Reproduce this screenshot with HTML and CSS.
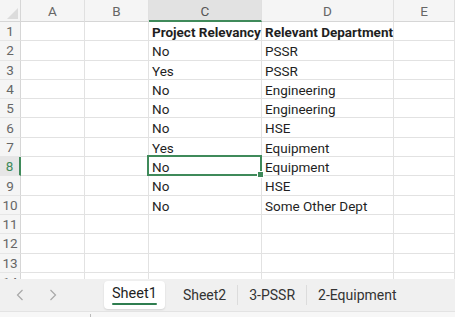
FILE: index.html
```html
<!DOCTYPE html>
<html lang="en">
<head>
    <meta charset="UTF-8">
    <meta name="viewport" content="width=device-width, initial-scale=1.0">
    <title>Sheet1</title>
    <link rel="stylesheet" href="styles.css">
</head>
<body>
    <div class="workbook">
        <div class="sheet">
            <div class="corner"><span class="corner-mark"></span></div>
            <div class="col-head">A</div>
            <div class="col-head">B</div>
            <div class="col-head active">C</div>
            <div class="col-head">D</div>
            <div class="col-head">E</div>

            <div class="row-head">1</div><div class="cell"></div><div class="cell"></div><div class="cell bold">Project Relevancy</div><div class="cell bold">Relevant Department</div><div class="cell"></div>
            <div class="row-head">2</div><div class="cell"></div><div class="cell"></div><div class="cell">No</div><div class="cell">PSSR</div><div class="cell"></div>
            <div class="row-head">3</div><div class="cell"></div><div class="cell"></div><div class="cell">Yes</div><div class="cell">PSSR</div><div class="cell"></div>
            <div class="row-head">4</div><div class="cell"></div><div class="cell"></div><div class="cell">No</div><div class="cell">Engineering</div><div class="cell"></div>
            <div class="row-head">5</div><div class="cell"></div><div class="cell"></div><div class="cell">No</div><div class="cell">Engineering</div><div class="cell"></div>
            <div class="row-head">6</div><div class="cell"></div><div class="cell"></div><div class="cell">No</div><div class="cell">HSE</div><div class="cell"></div>
            <div class="row-head">7</div><div class="cell"></div><div class="cell"></div><div class="cell">Yes</div><div class="cell">Equipment</div><div class="cell"></div>
            <div class="row-head active">8</div><div class="cell"></div><div class="cell"></div><div class="cell selected">No</div><div class="cell">Equipment</div><div class="cell"></div>
            <div class="row-head">9</div><div class="cell"></div><div class="cell"></div><div class="cell">No</div><div class="cell">HSE</div><div class="cell"></div>
            <div class="row-head">10</div><div class="cell"></div><div class="cell"></div><div class="cell">No</div><div class="cell">Some Other Dept</div><div class="cell"></div>
            <div class="row-head">11</div><div class="cell"></div><div class="cell"></div><div class="cell"></div><div class="cell"></div><div class="cell"></div>
            <div class="row-head">12</div><div class="cell"></div><div class="cell"></div><div class="cell"></div><div class="cell"></div><div class="cell"></div>
            <div class="row-head">13</div><div class="cell"></div><div class="cell"></div><div class="cell"></div><div class="cell"></div><div class="cell"></div>
            <div class="row-head">14</div><div class="cell"></div><div class="cell"></div><div class="cell"></div><div class="cell"></div><div class="cell"></div>
        </div>

        <div class="tab-bar">
            <div class="nav">
                <svg class="arrow" width="8" height="12" viewBox="0 0 8 12"><polyline points="6.5,1 1.5,6 6.5,11" fill="none" stroke="#a8a8a8" stroke-width="1.2"/></svg>
                <svg class="arrow" width="8" height="12" viewBox="0 0 8 12"><polyline points="1.5,1 6.5,6 1.5,11" fill="none" stroke="#a8a8a8" stroke-width="1.2"/></svg>
            </div>
            <div class="tab current">Sheet1</div>
            <div class="tab">Sheet2</div>
            <div class="tab">3-PSSR</div>
            <div class="tab">2-Equipment</div>
        </div>
        <div class="status-strip"><span class="tick"></span></div>
    </div>
</body>
</html>
```

FILE: styles.css
```css
body {
    margin: 0;
    padding: 0;
    background-color: #fff;
    font-family: 'Roboto', 'Liberation Sans', sans-serif;
    color: #1f1f1f;
}
.workbook {
    width: 455px;
    height: 317px;
    overflow: hidden;
    display: flex;
    flex-direction: column;
}
.sheet {
    height: 279px;
    flex: none;
    overflow: hidden;
    display: grid;
    grid-template-columns: 21px 64px 64px 113px 132px 1fr;
    grid-template-rows: 22px;
    grid-auto-rows: 19.3px;
}
.corner {
    background-color: #f5f5f5;
    border-right: 1px solid #d6d6d6;
    border-bottom: 1px solid #d6d6d6;
    box-sizing: border-box;
    position: relative;
}
.corner-mark {
    position: absolute;
    right: 2px;
    bottom: 2px;
    width: 0;
    height: 0;
    border-left: 11px solid transparent;
    border-bottom: 11px solid #dcdcdc;
}
.col-head {
    background-color: #f5f5f5;
    border-right: 1px solid #e0e0e0;
    border-bottom: 1px solid #d6d6d6;
    box-sizing: border-box;
    display: flex;
    align-items: center;
    justify-content: center;
    font-size: 13.5px;
    color: #666;
    padding-top: 1px;
}
.col-head.active {
    background-color: #e2e2e2;
    border-bottom: 2px solid #3f8a5a;
    color: #555;
}
.row-head {
    background-color: #f5f5f5;
    border-right: 1px solid #d6d6d6;
    border-bottom: 1px solid #e6e6e6;
    box-sizing: border-box;
    display: flex;
    align-items: center;
    justify-content: center;
    font-size: 13.5px;
    color: #666;
}
.row-head.active {
    background-color: #e6e6e6;
    border-right: 2px solid #3f8a5a;
    color: #3f8a5a;
}
.cell {
    border-right: 1px solid #e2e2e2;
    border-bottom: 1px solid #e2e2e2;
    box-sizing: border-box;
    font-size: 13.5px;
    line-height: 18px;
    padding: 1px 3px 0;
    white-space: nowrap;
    overflow: visible;
}
.bold {
    font-weight: bold;
}
.selected {
    position: relative;
}
.selected::after {
    content: '';
    position: absolute;
    left: -2px;
    top: -2px;
    right: -1px;
    bottom: -1px;
    border: 2px solid #3f8a5a;
}
.selected::before {
    content: '';
    position: absolute;
    right: -3px;
    bottom: -3px;
    width: 5px;
    height: 5px;
    background-color: #3f8a5a;
    border: 1px solid #fff;
    z-index: 2;
}
.tab-bar {
    height: 32px;
    flex: none;
    background-color: #f0f0f0;
    display: flex;
    align-items: center;
    font-size: 14px;
}
.nav {
    width: 104px;
    display: flex;
    align-items: center;
    gap: 25px;
    padding-left: 16px;
    box-sizing: border-box;
}
.arrow {
    display: block;
}
.tab {
    padding: 0 11px;
    height: 20px;
    line-height: 20px;
    color: #333;
    border-left: 1px solid #dcdcdc;
}
.tab.current {
    background-color: #fff;
    border-left: none;
    height: 28px;
    line-height: 26px;
    border-radius: 4px;
    box-shadow: 0 1px 2px rgba(0, 0, 0, 0.12);
    padding: 0 8px;
    color: #1f1f1f;
    position: relative;
    margin-right: 5px;
    font-size: 14.5px;
}
.tab.current::after {
    content: '';
    position: absolute;
    left: 8px;
    right: 8px;
    bottom: 4px;
    height: 2px;
    border-radius: 1px;
    background-color: #2e7d4f;
}
.tab.current + .tab {
    border-left: none;
    padding-left: 13px;
}
.status-strip {
    flex: 1;
    background-color: #f7f7f7;
    border-top: 1px solid #e3e3e3;
    position: relative;
}
.tick {
    position: absolute;
    left: 90px;
    top: 2px;
    width: 1px;
    height: 4px;
    background-color: #bbb;
}
```
